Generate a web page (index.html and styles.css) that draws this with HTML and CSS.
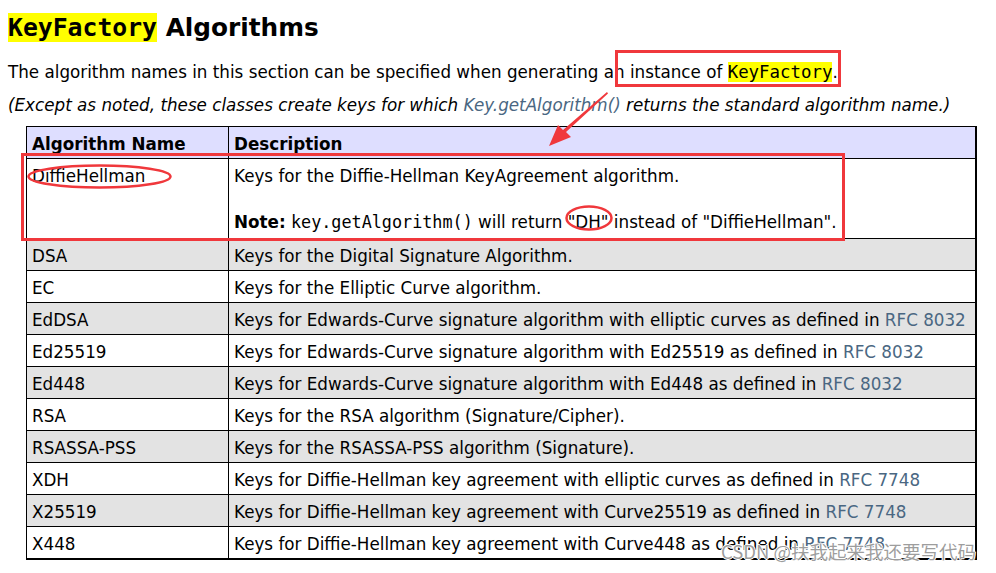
FILE: index.html
```html
<!DOCTYPE html>
<html>
<head>
<meta charset="utf-8">
<link rel="stylesheet" href="styles.css">
</head>
<body>
<h2 class="title"><code class="hl">KeyFactory</code> Algorithms</h2>
<p class="intro">The algorithm names in this section can be specified when generating an instance of <code class="hl">KeyFactory</code>.</p>
<p class="note-it">(Except as noted, these classes create keys for which <a class="lnk">Key.getAlgorithm()</a> returns the standard algorithm name.)</p>
<table class="algs">
  <thead>
    <tr><th class="c1">Algorithm Name</th><th>Description</th></tr>
  </thead>
  <tbody>
    <tr class="w"><td class="c1">DiffieHellman</td><td><div>Keys for the Diffie-Hellman KeyAgreement algorithm.</div><p class="cellp"><strong>Note:</strong> <code>key.getAlgorithm()</code> will return "DH" instead of "DiffieHellman".</p></td></tr>
    <tr class="g"><td class="c1">DSA</td><td>Keys for the Digital Signature Algorithm.</td></tr>
    <tr class="w"><td class="c1">EC</td><td>Keys for the Elliptic Curve algorithm.</td></tr>
    <tr class="g"><td class="c1">EdDSA</td><td>Keys for Edwards-Curve signature algorithm with elliptic curves as defined in <a class="lnk">RFC 8032</a></td></tr>
    <tr class="w"><td class="c1">Ed25519</td><td>Keys for Edwards-Curve signature algorithm with Ed25519 as defined in <a class="lnk">RFC 8032</a></td></tr>
    <tr class="g"><td class="c1">Ed448</td><td>Keys for Edwards-Curve signature algorithm with Ed448 as defined in <a class="lnk">RFC 8032</a></td></tr>
    <tr class="w"><td class="c1">RSA</td><td>Keys for the RSA algorithm (Signature/Cipher).</td></tr>
    <tr class="g"><td class="c1">RSASSA-PSS</td><td>Keys for the RSASSA-PSS algorithm (Signature).</td></tr>
    <tr class="w"><td class="c1">XDH</td><td>Keys for Diffie-Hellman key agreement with elliptic curves as defined in <a class="lnk">RFC 7748</a></td></tr>
    <tr class="g"><td class="c1">X25519</td><td>Keys for Diffie-Hellman key agreement with Curve25519 as defined in <a class="lnk">RFC 7748</a></td></tr>
    <tr class="w"><td class="c1">X448</td><td>Keys for Diffie-Hellman key agreement with Curve448 as defined in <a class="lnk">RFC 7748</a></td></tr>
  </tbody>
</table>

<svg class="marks" width="996" height="573" viewBox="0 0 996 573">
  <rect x="616.5" y="51.5" width="223" height="34" fill="none" stroke="#f0383c" stroke-width="3"/>
  <rect x="22.5" y="154.5" width="821" height="85" fill="none" stroke="#f0383c" stroke-width="3"/>
  <ellipse cx="99.5" cy="176.5" rx="71" ry="11" fill="none" stroke="#f0383c" stroke-width="2.5"/>
  <ellipse cx="589" cy="218" rx="22.5" ry="11.5" fill="none" stroke="#f0383c" stroke-width="2.5"/>
  <polygon points="607,92 608,93.5 566,132 571,137 549,146 558,125 563,130" fill="#f0383c"/>
</svg>
<div class="wm">CSDN @扶我起来我还要写代码</div>
</body>
</html>
```
FILE: styles.css
```css
html, body {
  margin: 0;
  padding: 0;
  background: #ffffff;
}
body {
  padding: 0 8px;
  font-family: "DejaVu Sans", Verdana, sans-serif;
  font-size: 16.75px;
  color: #000;
  position: relative;
  width: 980px;
  height: 573px;
  overflow: hidden;
}
code {
  font-family: "DejaVu Sans Mono", monospace;
  font-size: 17.4px;
}
.hl {
  background: #ffff00;
}
.title {
  margin: 13px 0 0;
  font-size: 24.75px;
  line-height: 29px;
  font-weight: bold;
}
.title code {
  font-size: 24.75px;
  font-weight: bold;
}
.intro {
  margin: 20px 0 0;
  line-height: 20px;
}
.note-it {
  margin: 13px 0 0;
  line-height: 20px;
  font-style: italic;
}
.lnk {
  color: #4a6782;
  text-decoration: none;
}
.algs {
  margin: 11px 0 0 18px;
  border-collapse: collapse;
  width: 951px;
  border-top: 1px solid #000;
  border-left: 1px solid #000;
  border-right: 2px solid #000;
  border-bottom: 2px solid #000;
}
.algs th, .algs td {
  border: 1px solid #000;
  text-align: left;
  vertical-align: top;
  padding: 7px 4px 4px 5px;
  line-height: 20px;
}
.algs thead tr {
  background: #dedeff;
}
.algs .c1 {
  width: 192px;
}
.algs tr.g {
  background: #e3e3e3;
}
.algs tr.w {
  background: #ffffff;
}
.cellp {
  margin: 26px 0 2px;
}
.cellp code {
  font-size: 16.8px;
}
.marks {
  position: absolute;
  left: 0;
  top: 0;
  pointer-events: none;
}
.wm {
  position: absolute;
  left: 721px;
  top: 538px;
  font-family: "Noto Sans CJK SC", sans-serif;
  font-size: 18.5px;
  line-height: 26px;
  color: rgba(140,140,140,0.85);
  text-shadow: 1px 0 #fff, -1px 0 #fff, 0 1px #fff, 0 -1px #fff;
  white-space: nowrap;
}
```
